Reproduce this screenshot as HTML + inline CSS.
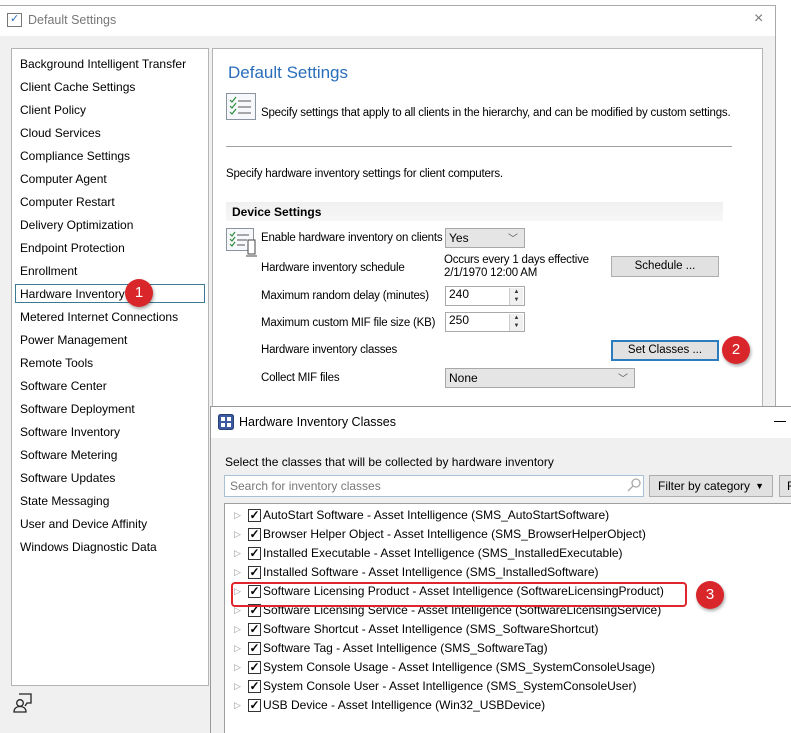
<!DOCTYPE html>
<html><head><meta charset="utf-8"><style>
*{margin:0;padding:0;box-sizing:border-box}
body{width:791px;height:733px;overflow:hidden;background:#fff;font-family:"Liberation Sans",sans-serif;position:relative;color:#000}
.a{position:absolute;white-space:nowrap}
.li{position:absolute;left:20px;font-size:12px;line-height:14px;white-space:nowrap}
.lb{position:absolute;left:261px;font-size:11.5px;line-height:14px;letter-spacing:-0.2px;white-space:nowrap}
.inp{position:absolute;background:#fff;border:1px solid #a8a8a8;font-size:12px;padding:2px 4px}
.btn{position:absolute;background:#e1e1e1;border:1px solid #adadad;font-size:11.5px;text-align:center;line-height:19px;white-space:nowrap}
.badge{position:absolute;width:28px;height:28px;border-radius:50%;background:#d9262b;color:#fff;font-size:15px;text-align:center;line-height:28px;box-shadow:1px 2px 3px rgba(0,0,0,.35)}
.row{position:absolute;left:233px;width:540px;height:19px;font-size:12px;line-height:19px;white-space:nowrap}
.row .t{position:absolute;left:1px;top:0;font-size:9px;color:#999}
.row .c{position:absolute;left:15px;top:3px;width:13px;height:13px;border:1px solid #333;background:#fff;font-size:12px;line-height:11px;text-align:center;font-weight:bold}
.row .x{position:absolute;left:30px;top:0}
.spin{position:absolute;right:1px;top:1px;width:14px;height:17px;border-left:1px solid #ccc;font-size:6px;line-height:8px;text-align:center;color:#333;background:#f0f0f0}
</style></head><body>
<div class="a" style="left:0;top:5px;width:776px;height:1px;background:#aaa"></div>
<div class="a" style="left:775px;top:5px;width:1px;height:728px;background:#aaa"></div>
<div class="a" style="left:0;top:36px;width:775px;height:697px;background:#f0f0f0"></div>
<div class="a" style="left:7px;top:13px;width:15px;height:14px;border:1px solid #777;background:#fff;font-size:11px;line-height:11px;color:#2a6ebb;padding-left:2px">✓</div>
<div class="a" style="left:28px;top:13px;font-size:12.5px;color:#777">Default Settings</div>
<div class="a" style="left:754px;top:10px;font-size:16px;color:#777">×</div>
<div class="a" style="left:11px;top:48px;width:198px;height:638px;background:#fff;border:1px solid #b4b4b4"></div>
<div class="li" style="top:57px">Background Intelligent Transfer</div>
<div class="li" style="top:80px">Client Cache Settings</div>
<div class="li" style="top:103px">Client Policy</div>
<div class="li" style="top:126px">Cloud Services</div>
<div class="li" style="top:149px">Compliance Settings</div>
<div class="li" style="top:172px">Computer Agent</div>
<div class="li" style="top:195px">Computer Restart</div>
<div class="li" style="top:218px">Delivery Optimization</div>
<div class="li" style="top:241px">Endpoint Protection</div>
<div class="li" style="top:264px">Enrollment</div>
<div class="a" style="left:15px;top:284px;width:190px;height:19px;border:1px solid #3c7a93"></div>
<div class="li" style="top:287px">Hardware Inventory</div>
<div class="li" style="top:310px">Metered Internet Connections</div>
<div class="li" style="top:333px">Power Management</div>
<div class="li" style="top:356px">Remote Tools</div>
<div class="li" style="top:379px">Software Center</div>
<div class="li" style="top:402px">Software Deployment</div>
<div class="li" style="top:425px">Software Inventory</div>
<div class="li" style="top:448px">Software Metering</div>
<div class="li" style="top:471px">Software Updates</div>
<div class="li" style="top:494px">State Messaging</div>
<div class="li" style="top:517px">User and Device Affinity</div>
<div class="li" style="top:540px">Windows Diagnostic Data</div>
<svg class="a" style="left:12px;top:692px" width="22" height="22" viewBox="0 0 22 22" fill="none" stroke="#222" stroke-width="1.3"><path d="M7 2h12v9h-4l-2 3"/><circle cx="8" cy="11" r="3.3"/><path d="M2 20c0-4 3-5.5 6-5.5s6 1.5 6 5.5z"/></svg>
<div class="badge" style="left:125px;top:279px">1</div>
<div class="a" style="left:212px;top:48px;width:551px;height:400px;background:#fff;border:1px solid #b4b4b4"></div>
<div class="a" style="left:228px;top:63px;font-size:17px;color:#2a6ebb">Default Settings</div>
<svg class="a" style="left:226px;top:93px" width="30" height="28" viewBox="0 0 30 28"><rect x="0.5" y="0.5" width="29" height="26" fill="#f6f8fb" stroke="#8a94a0"/><path d="M4 7l2 2 4-5M4 13l2 2 4-5M4 19l2 2 4-5" stroke="#2c8a3c" fill="none" stroke-width="1.2"/><path d="M12 8h13M12 14h13M12 20h13" stroke="#555"/></svg>
<div class="a" style="left:261px;top:107px;font-size:11.5px;letter-spacing:-0.2px">Specify settings that apply to all clients in the hierarchy, and can be modified by custom settings.</div>
<div class="a" style="left:226px;top:146px;width:506px;height:1px;background:#a0a0a0"></div>
<div class="a" style="left:226px;top:168px;font-size:11.5px;letter-spacing:-0.2px">Specify hardware inventory settings for client computers.</div>
<div class="a" style="left:226px;top:202px;width:497px;height:19px;background:linear-gradient(#f0f0f0,#f7f7f7)"></div>
<div class="a" style="left:232px;top:205px;font-size:12px;font-weight:bold">Device Settings</div>
<svg class="a" style="left:226px;top:228px" width="32" height="30" viewBox="0 0 32 30"><rect x="0.5" y="0.5" width="27" height="22" fill="#f6f8fb" stroke="#8a94a0"/><path d="M4 6l2 2 3-4M4 11l2 2 3-4M4 16l2 2 3-4" stroke="#2c8a3c" fill="none" stroke-width="1.2"/><path d="M11 7h12M11 12h10M11 17h8" stroke="#555"/><rect x="22" y="12" width="7" height="14" fill="#fff" stroke="#444"/><path d="M20 28h11" stroke="#444"/></svg>
<div class="lb" style="top:231px">Enable hardware inventory on clients</div>
<div class="inp" style="left:445px;top:228px;width:80px;height:20px;background:#e5e5e5;padding:2px 3px">Yes<span style="position:absolute;right:6px;top:1px;font-size:10px;color:#555">﹀</span></div>
<div class="lb" style="top:261px">Hardware inventory schedule</div>
<div class="a" style="left:444px;top:254px;font-size:11.5px;line-height:13px;letter-spacing:-0.2px">Occurs every 1 days effective<br>2/1/1970 12:00 AM</div>
<div class="btn" style="left:611px;top:256px;width:108px;height:21px">Schedule ...</div>
<div class="lb" style="top:289px">Maximum random delay (minutes)</div>
<div class="inp" style="left:445px;top:286px;width:80px;height:20px;padding:0 3px">240<div class="spin">▲<br>▼</div></div>
<div class="lb" style="top:316px">Maximum custom MIF file size (KB)</div>
<div class="inp" style="left:445px;top:312px;width:80px;height:20px;padding:0 3px">250<div class="spin">▲<br>▼</div></div>
<div class="lb" style="top:343px">Hardware inventory classes</div>
<div class="btn" style="left:611px;top:340px;width:108px;height:21px;border:2px solid #2b7cbf;line-height:17px">Set Classes ...</div>
<div class="badge" style="left:722px;top:336px">2</div>
<div class="lb" style="top:371px">Collect MIF files</div>
<div class="inp" style="left:445px;top:368px;width:190px;height:20px;background:#e5e5e5;padding:2px 3px">None<span style="position:absolute;right:6px;top:1px;font-size:10px;color:#555">﹀</span></div>
<div class="a" style="left:210px;top:406px;width:581px;height:327px;background:#f0f0f0;border-top:1px solid #999;border-left:1px solid #999"></div>
<div class="a" style="left:211px;top:407px;width:580px;height:31px;background:#fff"></div>
<svg class="a" style="left:218px;top:414px" width="16" height="16" viewBox="0 0 16 16"><rect x="0.5" y="0.5" width="15" height="15" rx="2" fill="#3b5aa0" stroke="#2a3f75"/><rect x="3" y="3" width="4" height="4" fill="#fff"/><rect x="9" y="3" width="4" height="4" fill="#fff"/><rect x="3" y="9" width="4" height="4" fill="#fff"/><rect x="9" y="9" width="4" height="4" fill="#fff"/></svg>
<div class="a" style="left:239px;top:415px;font-size:12.5px">Hardware Inventory Classes</div>
<div class="a" style="left:774px;top:421px;width:12px;height:1px;background:#000"></div>
<div class="a" style="left:225px;top:455px;font-size:12px">Select the classes that will be collected by hardware inventory</div>
<div class="a" style="left:224px;top:475px;width:420px;height:22px;background:#fff;border:1px solid #a9c0d6"></div>
<div class="a" style="left:230px;top:479px;font-size:12px;color:#777">Search for inventory classes</div>
<svg class="a" style="left:626px;top:477px" width="16" height="16" viewBox="0 0 16 16" fill="none" stroke="#aaa" stroke-width="1.3"><circle cx="10" cy="6" r="4"/><path d="M7 9l-5 5"/></svg>
<div class="btn" style="left:649px;top:475px;width:124px;height:22px;font-size:12px;text-align:left;padding-left:8px;line-height:20px">Filter by category <span style="font-size:9px;position:absolute;right:8px">▼</span></div>
<div class="btn" style="left:779px;top:475px;width:20px;height:22px;font-size:12px;text-align:left;padding-left:7px;line-height:20px">F</div>
<div class="a" style="left:224px;top:503px;width:567px;height:230px;background:#fff;border:1px solid #a0a0a0;border-right:none;border-bottom:none"></div>
<div class="row" style="top:506px"><span class="t">▷</span><span class="c">✓</span><span class="x">AutoStart Software - Asset Intelligence (SMS_AutoStartSoftware)</span></div>
<div class="row" style="top:525px"><span class="t">▷</span><span class="c">✓</span><span class="x">Browser Helper Object - Asset Intelligence (SMS_BrowserHelperObject)</span></div>
<div class="row" style="top:544px"><span class="t">▷</span><span class="c">✓</span><span class="x">Installed Executable - Asset Intelligence (SMS_InstalledExecutable)</span></div>
<div class="row" style="top:563px"><span class="t">▷</span><span class="c">✓</span><span class="x">Installed Software - Asset Intelligence (SMS_InstalledSoftware)</span></div>
<div class="row" style="top:582px"><span class="t">▷</span><span class="c">✓</span><span class="x">Software Licensing Product - Asset Intelligence (SoftwareLicensingProduct)</span></div>
<div class="row" style="top:601px"><span class="t">▷</span><span class="c">✓</span><span class="x">Software Licensing Service - Asset Intelligence (SoftwareLicensingService)</span></div>
<div class="row" style="top:620px"><span class="t">▷</span><span class="c">✓</span><span class="x">Software Shortcut - Asset Intelligence (SMS_SoftwareShortcut)</span></div>
<div class="row" style="top:639px"><span class="t">▷</span><span class="c">✓</span><span class="x">Software Tag - Asset Intelligence (SMS_SoftwareTag)</span></div>
<div class="row" style="top:658px"><span class="t">▷</span><span class="c">✓</span><span class="x">System Console Usage - Asset Intelligence (SMS_SystemConsoleUsage)</span></div>
<div class="row" style="top:677px"><span class="t">▷</span><span class="c">✓</span><span class="x">System Console User - Asset Intelligence (SMS_SystemConsoleUser)</span></div>
<div class="row" style="top:696px"><span class="t">▷</span><span class="c">✓</span><span class="x">USB Device - Asset Intelligence (Win32_USBDevice)</span></div>
<div class="a" style="left:231px;top:582px;width:456px;height:25px;border:2px solid #e0262c;border-radius:4px"></div>
<div class="badge" style="left:696px;top:581px">3</div>
</body></html>
